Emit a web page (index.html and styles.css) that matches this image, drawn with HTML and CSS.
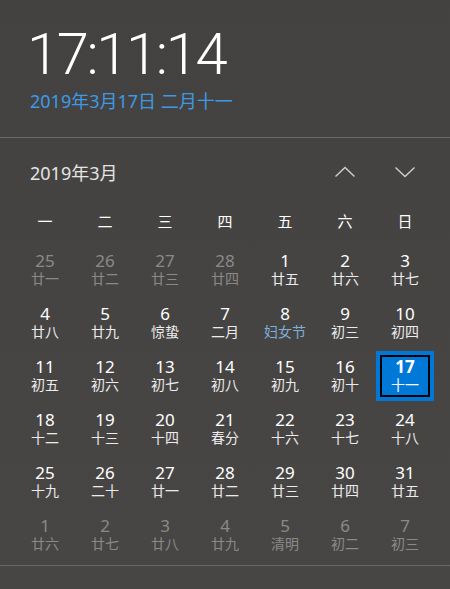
FILE: index.html
```html
<!DOCTYPE html>
<html lang="zh-CN">
<head>
<meta charset="utf-8">
<title>日历</title>
<link rel="stylesheet" href="styles.css">
</head>
<body>
<div class="panel">
  <div class="clock">
    <div class="time">17:11:14</div>
    <div class="date">2019年3月17日 二月十一</div>
  </div>
  <div class="sep"></div>
  <div class="cal">
    <div class="cal-head">
      <span class="month">2019年3月</span>
      <div class="nav">
        <span class="nav-btn"><svg width="22" height="12" viewBox="0 0 22 12"><polyline points="1.5,10.5 11,1.5 20.5,10.5" fill="none" stroke="#cfcfcf" stroke-width="1.4"/></svg></span>
        <span class="nav-btn"><svg width="22" height="12" viewBox="0 0 22 12"><polyline points="1.5,1.5 11,10.5 20.5,1.5" fill="none" stroke="#cfcfcf" stroke-width="1.4"/></svg></span>
      </div>
    </div>
    <div class="grid">
      <div class="wd">一</div><div class="wd">二</div><div class="wd">三</div><div class="wd">四</div><div class="wd">五</div><div class="wd">六</div><div class="wd">日</div>

      <div class="day other"><span class="n">25</span><span class="l">廿一</span></div>
      <div class="day other"><span class="n">26</span><span class="l">廿二</span></div>
      <div class="day other"><span class="n">27</span><span class="l">廿三</span></div>
      <div class="day other"><span class="n">28</span><span class="l">廿四</span></div>
      <div class="day"><span class="n">1</span><span class="l">廿五</span></div>
      <div class="day"><span class="n">2</span><span class="l">廿六</span></div>
      <div class="day"><span class="n">3</span><span class="l">廿七</span></div>

      <div class="day"><span class="n">4</span><span class="l">廿八</span></div>
      <div class="day"><span class="n">5</span><span class="l">廿九</span></div>
      <div class="day"><span class="n">6</span><span class="l">惊蛰</span></div>
      <div class="day"><span class="n">7</span><span class="l">二月</span></div>
      <div class="day"><span class="n">8</span><span class="l fest">妇女节</span></div>
      <div class="day"><span class="n">9</span><span class="l">初三</span></div>
      <div class="day"><span class="n">10</span><span class="l">初四</span></div>

      <div class="day"><span class="n">11</span><span class="l">初五</span></div>
      <div class="day"><span class="n">12</span><span class="l">初六</span></div>
      <div class="day"><span class="n">13</span><span class="l">初七</span></div>
      <div class="day"><span class="n">14</span><span class="l">初八</span></div>
      <div class="day"><span class="n">15</span><span class="l">初九</span></div>
      <div class="day"><span class="n">16</span><span class="l">初十</span></div>
      <div class="day today"><span class="n">17</span><span class="l">十一</span></div>

      <div class="day"><span class="n">18</span><span class="l">十二</span></div>
      <div class="day"><span class="n">19</span><span class="l">十三</span></div>
      <div class="day"><span class="n">20</span><span class="l">十四</span></div>
      <div class="day"><span class="n">21</span><span class="l">春分</span></div>
      <div class="day"><span class="n">22</span><span class="l">十六</span></div>
      <div class="day"><span class="n">23</span><span class="l">十七</span></div>
      <div class="day"><span class="n">24</span><span class="l">十八</span></div>

      <div class="day"><span class="n">25</span><span class="l">十九</span></div>
      <div class="day"><span class="n">26</span><span class="l">二十</span></div>
      <div class="day"><span class="n">27</span><span class="l">廿一</span></div>
      <div class="day"><span class="n">28</span><span class="l">廿二</span></div>
      <div class="day"><span class="n">29</span><span class="l">廿三</span></div>
      <div class="day"><span class="n">30</span><span class="l">廿四</span></div>
      <div class="day"><span class="n">31</span><span class="l">廿五</span></div>

      <div class="day other"><span class="n">1</span><span class="l">廿六</span></div>
      <div class="day other"><span class="n">2</span><span class="l">廿七</span></div>
      <div class="day other"><span class="n">3</span><span class="l">廿八</span></div>
      <div class="day other"><span class="n">4</span><span class="l">廿九</span></div>
      <div class="day other"><span class="n">5</span><span class="l">清明</span></div>
      <div class="day other"><span class="n">6</span><span class="l">初二</span></div>
      <div class="day other"><span class="n">7</span><span class="l">初三</span></div>
    </div>
  </div>
  <div class="sep bottom"></div>
</div>
</body>
</html>
```

FILE: styles.css
```css
html, body {
  margin: 0;
  padding: 0;
}
body {
  width: 450px;
  height: 589px;
  overflow: hidden;
  background: linear-gradient(180deg, #444241 0%, #464443 50%, #484645 100%);
  font-family: "Noto Sans", "Noto Sans CJK SC", sans-serif;
  color: #ffffff;
}
.panel {
  display: flex;
  flex-direction: column;
}
.clock {
  padding: 22px 0 0 30px;
  height: 115px;
  box-sizing: border-box;
}
.time {
  font-family: Roboto, "Noto Sans", sans-serif;
  font-weight: 300;
  font-size: 58px;
  line-height: 64px;
  letter-spacing: -2.4px;
  color: #ffffff;
  margin-left: -3px;
}
.date {
  font-size: 18px;
  line-height: 24px;
  color: #3d9ae4;
  margin-top: 3px;
}
.sep {
  height: 1px;
  background: #6c6a69;
  margin-top: 22px;
}
.sep.bottom {
  margin-top: 4px;
}
.cal-head {
  height: 60px;
  box-sizing: border-box;
  padding: 8px 0 0 30px;
  display: flex;
  align-items: center;
  justify-content: space-between;
}
.month {
  font-size: 18px;
  color: #e4e4e4;
}
.nav {
  display: flex;
  margin-right: 15px;
}
.nav-btn {
  width: 60px;
  height: 40px;
  display: flex;
  align-items: center;
  justify-content: center;
  margin-top: -1px;
}
.grid {
  margin: 0 15px;
  display: grid;
  grid-template-columns: repeat(7, 60px);
  grid-template-rows: 45px repeat(6, 53px);
}
.wd {
  display: flex;
  align-items: center;
  justify-content: center;
  font-size: 15px;
  color: #ffffff;
}
.day {
  display: flex;
  flex-direction: column;
  align-items: center;
  justify-content: center;
}
.n {
  font-size: 17px;
  line-height: 18px;
  color: #ffffff;
}
.l {
  font-size: 14px;
  line-height: 18px;
  color: #ececec;
}
.l.fest {
  color: #7cb0dc;
}
.other .n,
.other .l {
  color: #8b8988;
}
.today {
  width: 58px;
  height: 50px;
  justify-self: center;
  align-self: center;
  box-sizing: border-box;
  background: #0078d7;
  box-shadow: inset 0 0 0 4px #0078d7, inset 0 0 0 6px #000000;
}
.today .n {
  font-weight: 700;
}
.today .l {
  color: #ffffff;
}
```
